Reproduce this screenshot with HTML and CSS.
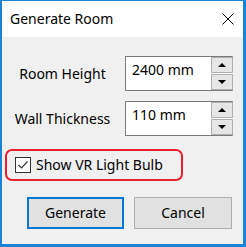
FILE: index.html
```html
<!DOCTYPE html>
<html>
<head>
<meta charset="utf-8">
<link rel="stylesheet" href="styles.css">
</head>
<body>
<div class="window">
  <div class="titlebar">
    <span class="title">Generate Room</span>
    <svg class="close" width="12" height="12" viewBox="0 0 12 12"><path d="M0.5 0.5 L11.5 11.5 M11.5 0.5 L0.5 11.5" stroke="#000" stroke-width="1" fill="none"/></svg>
  </div>
  <div class="content">
    <div class="form">
      <label class="label">Room Height</label>
      <div class="spin">
        <div class="spin-text">2400 mm</div>
        <div class="spin-btns">
          <div class="spin-btn"><span class="tri-up"></span></div>
          <div class="spin-btn"><span class="tri-down"></span></div>
        </div>
      </div>
      <label class="label">Wall Thickness</label>
      <div class="spin">
        <div class="spin-text">110 mm</div>
        <div class="spin-btns">
          <div class="spin-btn"><span class="tri-up"></span></div>
          <div class="spin-btn"><span class="tri-down"></span></div>
        </div>
      </div>
    </div>
    <div class="check-group">
      <span class="checkbox"><svg width="14" height="14" viewBox="0 0 14 14"><path d="M2.5 7 L5.5 10 L11.5 3.5" stroke="#333" stroke-width="1.2" fill="none"/></svg></span>
      <span class="check-label">Show VR Light Bulb</span>
    </div>
    <div class="buttons">
      <div class="btn btn-default">Generate</div>
      <div class="btn">Cancel</div>
    </div>
  </div>
</div>
</body>
</html>
```
FILE: styles.css
```css
html, body {
  margin: 0;
  padding: 0;
  background: #f0f0f0;
}
.window {
  width: 246px;
  height: 247px;
  box-sizing: border-box;
  border-style: solid;
  border-color: #1883d7;
  border-width: 1px 3px 3px 2px;
  display: flex;
  flex-direction: column;
  font-family: "Noto Sans", "Open Sans", sans-serif;
  font-size: 14px;
  color: #000;
}
.titlebar {
  height: 36px;
  background: #fff;
  display: flex;
  align-items: center;
  justify-content: space-between;
  padding: 0 9px 0 8px;
}
.title {
  line-height: 20px;
  margin-top: -1px;
}
.close {
  display: block;
  margin-top: -1px;
}
.content {
  flex: 1;
  background: #f0f0f0;
  display: flex;
  flex-direction: column;
}
.form {
  display: grid;
  grid-template-columns: 121px 108px;
  column-gap: 2px;
  row-gap: 10px;
  align-items: center;
  margin-top: 19px;
}
.label {
  text-align: center;
  line-height: 20px;
}
.spin {
  height: 35px;
  box-sizing: border-box;
  border: 1px solid #7a7a7a;
  border-right-color: #b0b0b0;
  background: #fff;
  display: flex;
}
.spin-text {
  flex: 1;
  padding: 3px 0 0 6px;
  line-height: 20px;
}
.spin-btns {
  width: 22px;
  display: flex;
  flex-direction: column;
  gap: 1px;
  background: #fff;
  margin-right: -1px;
}
.spin-btn {
  flex: 1;
  box-sizing: border-box;
  border: 1px solid #b0b0b0;
  background: #e6e6e6;
  display: flex;
  align-items: center;
  justify-content: center;
}
.tri-up {
  width: 0;
  height: 0;
  border-left: 4px solid transparent;
  border-right: 4px solid transparent;
  border-bottom: 4px solid #000;
}
.tri-down {
  width: 0;
  height: 0;
  border-left: 4px solid transparent;
  border-right: 4px solid transparent;
  border-top: 4px solid #000;
}
.check-group {
  margin: 13px 0 0 3px;
  width: 178px;
  height: 32px;
  box-sizing: border-box;
  border: 2px solid #e8202e;
  border-radius: 7px;
  display: flex;
  align-items: center;
  padding-left: 8px;
}
.checkbox {
  width: 16px;
  height: 16px;
  box-sizing: border-box;
  border: 1px solid #333;
  background: #fff;
  display: flex;
  align-items: center;
  justify-content: center;
}
.checkbox svg {
  display: block;
}
.check-label {
  margin-left: 5px;
  line-height: 20px;
}
.buttons {
  display: flex;
  gap: 10px;
  margin: 16px 0 0 25px;
}
.btn {
  width: 98px;
  height: 32px;
  box-sizing: border-box;
  border: 1px solid #adadad;
  background: #e1e1e1;
  display: flex;
  align-items: center;
  justify-content: center;
  line-height: 20px;
}
.btn-default {
  width: 97px;
  border: 2px solid #0078d7;
}
```
